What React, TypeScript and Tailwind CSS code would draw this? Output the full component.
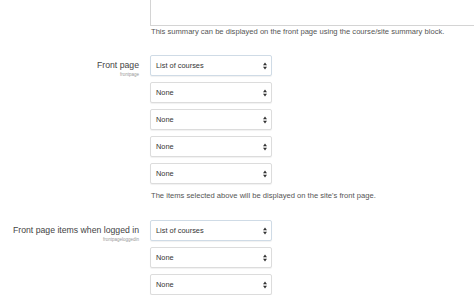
const font = { fontFamily: '"Liberation Sans", Arial, sans-serif' };

function Arrows() {
  return (
    <svg width="4" height="8" viewBox="0 0 4 8" className="shrink-0">
      <path d="M0 3.2 L2 0.6 L4 3.2 Z" fill="#333" />
      <path d="M0 4.8 L2 7.4 L4 4.8 Z" fill="#333" />
    </svg>
  );
}

function Select({ value, focused }: { value: string; focused?: boolean }) {
  return (
    <div
      className={`flex h-[21px] w-[122px] items-center justify-between rounded-[2px] border bg-white pl-[5px] pr-[4px] shadow-[0_1px_1px_rgba(0,0,0,0.06)] ${
        focused ? "border-[#cfdbe6]" : "border-[#dcdcdc]"
      }`}
    >
      <span className="text-[7.4px] leading-none text-[#333]">{value}</span>
      <Arrows />
    </div>
  );
}

function Row({
  label,
  sub,
  items,
}: {
  label: string;
  sub: string;
  items: string[];
}) {
  return (
    <div className="flex">
      <div className="w-[139px] shrink-0 pt-[5px] text-right">
        <div className="text-[8.7px] leading-[11px] text-[#444]">{label}</div>
        <div className="mt-[1px] text-[4.5px] leading-[6px] text-[#999]">{sub}</div>
      </div>
      <div className="ml-[11px] flex flex-col gap-[6px]">
        {items.map((v, i) => (
          <Select key={i} value={v} focused={i === 0} />
        ))}
      </div>
    </div>
  );
}

export default function App() {
  return (
    <div className="h-[295px] w-[474px] overflow-hidden bg-white" style={font}>
      <div className="ml-[150px] h-[26px] w-[340px] border border-t-0 border-[#d4d4d4] bg-white" />
      <p className="ml-[151px] mt-[1px] text-[7.6px] leading-[9px] text-[#555]">
        This summary can be displayed on the front page using the course/site summary block.
      </p>

      <div className="mt-[19px]">
        <Row
          label="Front page"
          sub="frontpage"
          items={["List of courses", "None", "None", "None", "None"]}
        />
      </div>
      <p className="ml-[151px] mt-[7px] text-[7.6px] leading-[9px] text-[#555]">
        The items selected above will be displayed on the site's front page.
      </p>

      <div className="mt-[20px]">
        <Row
          label="Front page items when logged in"
          sub="frontpageloggedin"
          items={["List of courses", "None", "None"]}
        />
      </div>
    </div>
  );
}
